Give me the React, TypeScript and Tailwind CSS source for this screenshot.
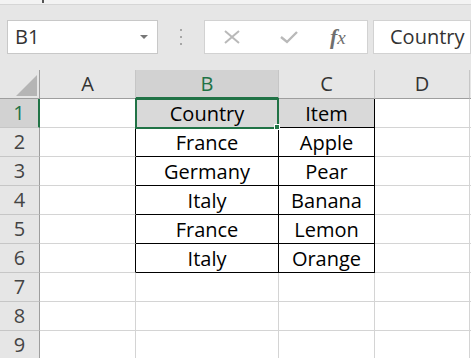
import React from "react";

const font = { fontFamily: '"Open Sans", "Noto Sans", sans-serif' };

const rows: [string, string][] = [
  ["Country", "Item"],
  ["France", "Apple"],
  ["Germany", "Pear"],
  ["Italy", "Banana"],
  ["France", "Lemon"],
  ["Italy", "Orange"],
  ["", ""],
  ["", ""],
  ["", ""],
];

export default function App() {
  return (
    <div className="w-[471px] h-[358px] overflow-hidden bg-[#e6e6e6] text-[#222]" style={font}>
      {/* top strip */}
      <div className="h-[5px] bg-[#f3f3f3] border-b border-[#d6d6d6] relative">
        <div className="absolute left-[42px] top-0 w-[2px] h-[3px] bg-[#555]" />
      </div>
      {/* formula bar */}
      <div className="h-[65px] flex items-start pt-[15px] pl-[7px]">
        <div className="w-[151px] h-[34px] bg-white border border-[#c8c8c8] flex items-center justify-between pl-[7px] pr-[9px]">
          <span className="text-[20px] text-[#333] leading-none">B1</span>
          <svg width="8" height="5" viewBox="0 0 8 5"><path d="M0 0h8L4 4z" fill="#777" /></svg>
        </div>
        <div className="w-[46px] h-[34px] flex flex-col items-center justify-center gap-[5px]">
          <div className="w-[2px] h-[2px] bg-[#a6a6a6]" />
          <div className="w-[2px] h-[2px] bg-[#a6a6a6]" />
          <div className="w-[2px] h-[2px] bg-[#a6a6a6]" />
        </div>
        <div className="w-[164px] h-[34px] bg-white border border-[#d2d2d2] flex items-center">
          <svg className="ml-[18px]" width="18" height="14" viewBox="0 0 18 14">
            <path d="M2 1L16 13M16 1L2 13" stroke="#b9b9b9" strokeWidth="2" fill="none" />
          </svg>
          <svg className="ml-[38px]" width="20" height="14" viewBox="0 0 20 14">
            <path d="M2 7L8 12L18 2" stroke="#b9b9b9" strokeWidth="2.4" fill="none" />
          </svg>
          <span className="ml-[31px] text-[22px] italic font-bold text-[#6f6f6f] leading-none" style={{ fontFamily: '"Liberation Serif", serif' }}>
            f<span className="font-normal text-[19px]">x</span>
          </span>
        </div>
        <div className="ml-[5px] flex-1 h-[34px] bg-white border border-[#d2d2d2] flex items-center pl-[16px]">
          <span className="text-[20px] text-[#333] leading-none">Country</span>
        </div>
      </div>
      {/* sheet */}
      <div className="grid grid-cols-[40px_96px_143px_96px_95px_1fr] grid-rows-[29px_29px_29px_29px_29px_29px_29px_29px_29px_29px] relative">
        {/* header row */}
        <div className="border-r border-b border-[#9e9e9e] bg-[#e6e6e6] relative">
          <svg className="absolute left-[16px] top-[5px]" width="21" height="21" viewBox="0 0 21 21">
            <path d="M0 21L21 0V21z" fill="#b5b5b5" />
          </svg>
        </div>
        <div className="border-r border-b border-r-[#c6c6c6] border-b-[#9e9e9e] bg-[#e6e6e6] flex items-center justify-center text-[20px] text-[#333]">A</div>
        <div className="border-r border-r-[#c6c6c6] border-b-2 border-b-[#217346] bg-[#d2d2d2] flex items-center justify-center text-[20px] text-[#217346] pt-[1px]">B</div>
        <div className="border-r border-b border-r-[#c6c6c6] border-b-[#9e9e9e] bg-[#e6e6e6] flex items-center justify-center text-[20px] text-[#333]">C</div>
        <div className="border-r border-b border-r-[#c6c6c6] border-b-[#9e9e9e] bg-[#e6e6e6] flex items-center justify-center text-[20px] text-[#333]">D</div>
        <div className="border-b border-b-[#9e9e9e] bg-[#e6e6e6]" />
        {rows.map(([b, c], i) => {
          const inTable = i < 6;
          const sel = i === 0;
          return (
            <React.Fragment key={i}>
              <div
                className={
                  sel
                    ? "border-r-2 border-r-[#217346] border-b border-b-[#c6c6c6] bg-[#d2d2d2] flex items-center justify-center text-[20px] text-[#217346]"
                    : "border-r border-r-[#9e9e9e] border-b border-b-[#c6c6c6] bg-[#e6e6e6] flex items-center justify-center text-[20px] text-[#444]"
                }
              >
                {i + 1}
              </div>
              <div className={"bg-white border-b border-b-[#d4d4d4] border-r " + (inTable ? "border-r-black" : "border-r-[#d4d4d4]")} />
              <div
                className={
                  "border-r border-b flex items-center justify-center text-[20px] text-black pt-[2px] " +
                  (inTable ? "border-r-black border-b-black " : "border-r-[#d4d4d4] border-b-[#d4d4d4] ") +
                  (sel ? "bg-[#d9d9d9]" : "bg-white")
                }
              >
                {b}
              </div>
              <div
                className={
                  "border-r border-b flex items-center justify-center text-[20px] text-black pt-[2px] " +
                  (inTable ? "border-r-black border-b-black " : "border-r-[#d4d4d4] border-b-[#d4d4d4] ") +
                  (sel ? "bg-[#d9d9d9]" : "bg-white")
                }
              >
                {c}
              </div>
              <div className="bg-white border-r border-b border-[#d4d4d4]" />
              <div className="bg-white border-b border-[#d4d4d4]" />
            </React.Fragment>
          );
        })}
        {/* selection */}
        <div className="absolute left-[135px] top-[28px] w-[144px] h-[31px] border-2 border-[#217346] pointer-events-none" />
        <div className="absolute left-[274px] top-[54px] w-[6px] h-[6px] bg-[#217346] border border-white pointer-events-none" />
      </div>
    </div>
  );
}
